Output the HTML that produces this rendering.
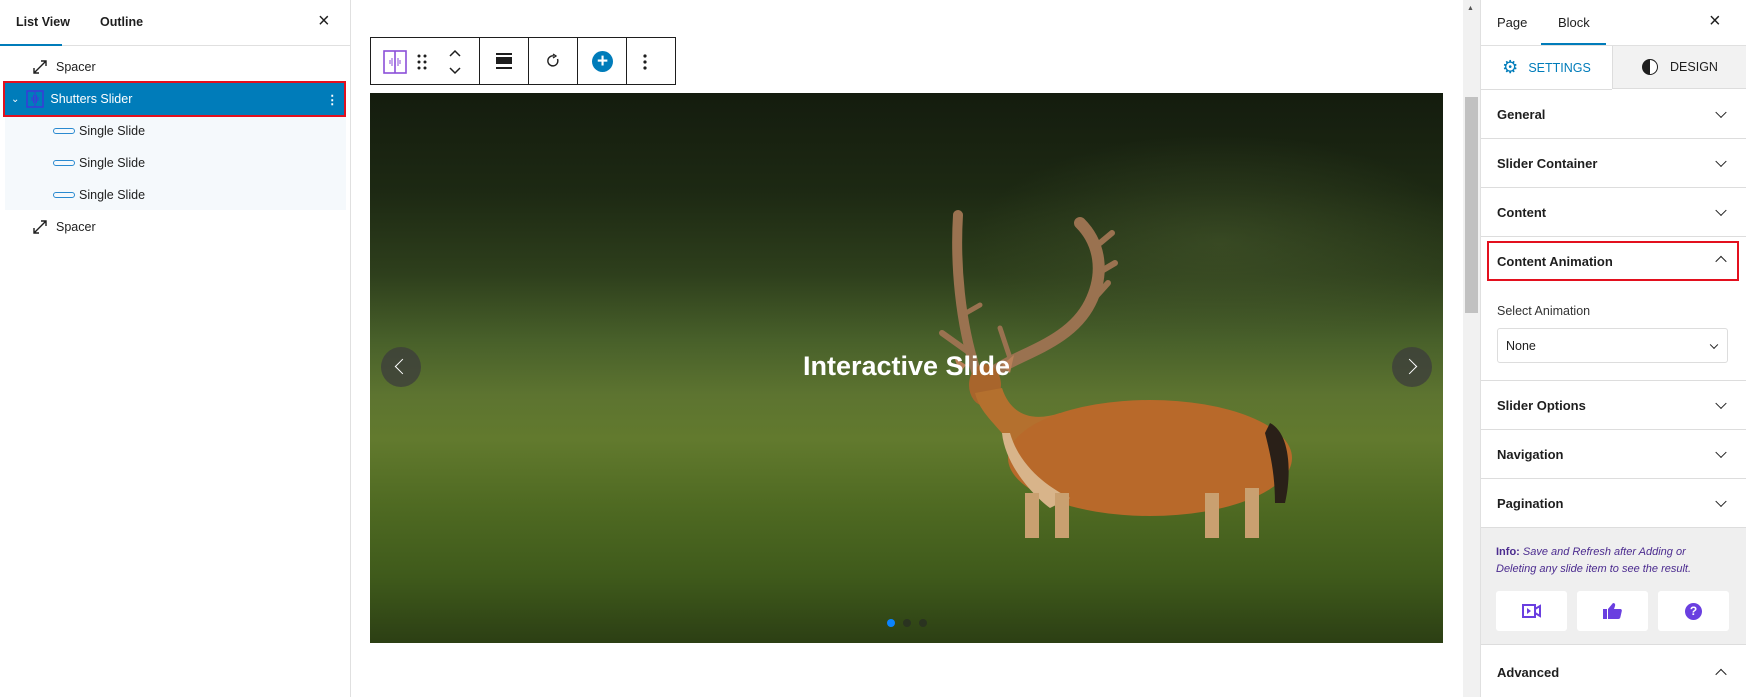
<!DOCTYPE html>
<html><head><meta charset="utf-8"><style>
*{box-sizing:border-box;margin:0;padding:0}
body{width:1746px;height:697px;overflow:hidden;background:#fff;font-family:"Liberation Sans",sans-serif;color:#1e1e1e;position:relative}
.abs{position:absolute}
.lp{left:0;top:0;width:351px;height:697px;border-right:1px solid #e0e0e0;background:#fff}
.row{position:absolute;left:0;width:351px;font-size:12.5px;display:flex;align-items:center}
.rp{left:1480px;top:0;width:266px;height:697px;background:#fff;border-left:1px solid #e0e0e0}
.sec{position:absolute;left:0;width:266px;border-bottom:1px solid #ddd;font-size:13px;font-weight:bold;display:flex;align-items:center;padding-left:16px;color:#1e1e1e}
.chev{position:absolute;right:22px;top:50%;width:8px;height:8px;border-right:1.6px solid #1e1e1e;border-bottom:1.6px solid #1e1e1e;transform:translateY(-70%) rotate(45deg)}
.chev.up{transform:translateY(-20%) rotate(-135deg)}
.tb{position:absolute;top:0;height:47px;border-right:1px solid #1e1e1e}
</style></head><body>

<div class="abs lp">
  <div class="abs" style="left:16px;top:15px;font-size:12.5px;font-weight:bold">List View</div>
  <div class="abs" style="left:100px;top:15px;font-size:12.5px;font-weight:bold">Outline</div>
  <div class="abs" style="left:318px;top:10px;font-size:20px">×</div>
  <div class="abs" style="left:0;top:45px;width:351px;height:1px;background:#e0e0e0"></div>
  <div class="abs" style="left:0;top:44px;width:62px;height:2px;background:#007cba"></div>

  <div class="row" style="top:55px;height:24px;padding-left:32px">
    <svg width="16" height="16" viewBox="0 0 16 16"><path d="M2 14L14 2M9 2h5v5M2 9v5h5" fill="none" stroke="#1e1e1e" stroke-width="1.4"/></svg>
    <span style="margin-left:8px">Spacer</span></div>

  <div class="abs" style="left:5px;top:117px;width:341px;height:93px;background:#f5f9fc"></div>
  <div class="abs" style="left:3px;top:81px;width:343px;height:36px;background:#007cba;border:2px solid #e3101e"></div>
  <div class="row" style="top:85px;height:28px;padding-left:11px;color:#fff">
    <span style="font-size:10px">&#8964;</span>
    <svg style="margin-left:7px" width="18" height="18" viewBox="0 0 18 18"><rect x="1" y="1" width="16" height="16" fill="none" stroke="#3a3ad8" stroke-width="1.5"/><path d="M9 1v16M6 7v4M12 7v4M7.5 5v8M10.5 5v8" stroke="#3a3ad8" stroke-width="1"/></svg>
    <span style="margin-left:6px">Shutters Slider</span>
    <span style="position:absolute;left:326px;font-weight:bold">&#8942;</span></div>

  <div class="row" style="top:119px;height:24px;padding-left:53px"><span style="display:inline-block;width:22px;height:6px;border:1.6px solid #2a8ad0;border-radius:3px"></span><span style="margin-left:4px">Single Slide</span></div>
  <div class="row" style="top:151px;height:24px;padding-left:53px"><span style="display:inline-block;width:22px;height:6px;border:1.6px solid #2a8ad0;border-radius:3px"></span><span style="margin-left:4px">Single Slide</span></div>
  <div class="row" style="top:183px;height:24px;padding-left:53px"><span style="display:inline-block;width:22px;height:6px;border:1.6px solid #2a8ad0;border-radius:3px"></span><span style="margin-left:4px">Single Slide</span></div>

  <div class="row" style="top:215px;height:24px;padding-left:32px">
    <svg width="16" height="16" viewBox="0 0 16 16"><path d="M2 14L14 2M9 2h5v5M2 9v5h5" fill="none" stroke="#1e1e1e" stroke-width="1.4"/></svg>
    <span style="margin-left:8px">Spacer</span></div>
</div>

<div class="abs" style="left:370px;top:37px;width:306px;height:48px;border:1px solid #1e1e1e;background:#fff">
  <div class="tb" style="left:0;width:109px">
    <svg class="abs" style="left:12px;top:12px" width="24" height="24" viewBox="0 0 24 24"><rect x="1" y="1" width="22" height="22" fill="none" stroke="#8b4fd8" stroke-width="1.6"/><path d="M12 1v22" stroke="#8b4fd8" stroke-width="1.6"/><path d="M7 10v4M9 8v8M15 8v8M17 10v4" stroke="#8b4fd8" stroke-width="1"/></svg>
    <svg class="abs" style="left:45px;top:15px" width="12" height="18" viewBox="0 0 12 18"><g fill="#1e1e1e"><circle cx="3" cy="3" r="1.5"/><circle cx="9" cy="3" r="1.5"/><circle cx="3" cy="9" r="1.5"/><circle cx="9" cy="9" r="1.5"/><circle cx="3" cy="15" r="1.5"/><circle cx="9" cy="15" r="1.5"/></g></svg>
    <svg class="abs" style="left:77px;top:11px" width="14" height="26" viewBox="0 0 14 26"><path d="M2 7l5-5 5 5M2 19l5 5 5-5" fill="none" stroke="#1e1e1e" stroke-width="1.5"/></svg>
  </div>
  <div class="tb" style="left:109px;width:49px"><div class="abs" style="left:16px;top:15px;width:16px;height:2px;background:#1e1e1e"></div><div class="abs" style="left:16px;top:19px;width:16px;height:7px;background:#1e1e1e"></div><div class="abs" style="left:16px;top:29px;width:16px;height:2px;background:#1e1e1e"></div></div>
  <div class="tb" style="left:158px;width:49px"><svg class="abs" style="left:16px;top:15px" width="16" height="16" viewBox="0 0 16 16"><path d="M12.5 6A5 5 0 1 1 9 3" fill="none" stroke="#1e1e1e" stroke-width="1.4"/><path d="M8 1l3 2-3 2" fill="none" stroke="#1e1e1e" stroke-width="1.3"/></svg></div>
  <div class="tb" style="left:207px;width:49px"><div class="abs" style="left:14px;top:13px;width:21px;height:21px;border-radius:50%;background:#007cba;color:#fff;font-size:19px;font-weight:bold;text-align:center;line-height:21px">+</div></div>
  <svg class="abs" style="left:271px;top:15px" width="6" height="18" viewBox="0 0 6 18"><g fill="#1e1e1e"><circle cx="3" cy="3" r="1.6"/><circle cx="3" cy="9" r="1.6"/><circle cx="3" cy="15" r="1.6"/></g></svg>
</div>

<div class="abs" style="left:370px;top:93px;width:1073px;height:550px;overflow:hidden;background:linear-gradient(180deg,#141c0e 0%,#1d2913 18%,#2e3f1c 33%,#48602a 45%,#5d7430 55%,#627a2e 63%,#4f6a22 75%,#3f5a1b 88%,#2c3f14 100%)">
  <div class="abs" style="left:600px;top:40px;width:500px;height:220px;background:radial-gradient(ellipse at center,rgba(80,100,50,.4),rgba(0,0,0,0) 70%)"></div>
  <svg class="abs" style="left:0;top:0" width="1073" height="550" viewBox="0 0 1073 550">
    <g fill="none" stroke="#9a7250" stroke-linecap="round">
      <path d="M606 278 C590 230 585 170 588 122" stroke-width="10"/>
      <path d="M600 260 L572 240" stroke-width="6"/>
      <path d="M596 220 L610 212" stroke-width="5"/>
      <path d="M625 278 C650 260 700 250 720 210 C735 180 730 150 710 130" stroke-width="12"/>
      <path d="M720 210 L738 190 M728 180 L745 170 M730 150 L742 140" stroke-width="6"/>
      <path d="M640 265 L630 235" stroke-width="5"/>
    </g>
    <ellipse cx="615" cy="292" rx="16" ry="21" fill="#a8652c"/>
    <path d="M596 272 l-12 -8 6 16z M632 272 l12 -10 -4 18z" fill="#b98058"/>
    <path d="M605 300 L632 295 C640 320 660 330 690 320 L700 370 C680 380 650 370 640 350 C625 330 610 320 605 300Z" fill="#b4702e"/>
    <ellipse cx="780" cy="365" rx="142" ry="58" fill="#b8692a"/>
    <path d="M900 330 C920 340 922 380 915 410 L905 410 C905 380 900 360 895 340Z" fill="#2a2018"/>
    <path d="M640 340 C650 375 680 395 700 405 L680 415 C660 400 635 370 632 340Z" fill="#d8b48a"/>
    <g fill="#c9a070"><rect x="655" y="400" width="14" height="45"/><rect x="685" y="400" width="14" height="45"/><rect x="835" y="400" width="14" height="45"/><rect x="875" y="395" width="14" height="50"/></g>
  </svg>
  <div class="abs" style="left:0;top:258px;width:1073px;text-align:center;color:#fff;font-size:27px;font-weight:bold">Interactive Slide</div>
  <div class="abs" style="left:11px;top:254px;width:40px;height:40px;border-radius:50%;background:rgba(60,60,60,.75)"><div class="abs" style="left:16px;top:14px;width:11px;height:11px;border-left:1.8px solid #fff;border-bottom:1.8px solid #fff;transform:rotate(45deg)"></div></div>
  <div class="abs" style="left:1022px;top:254px;width:40px;height:40px;border-radius:50%;background:rgba(60,60,60,.75)"><div class="abs" style="left:12px;top:14px;width:11px;height:11px;border-right:1.8px solid #fff;border-top:1.8px solid #fff;transform:rotate(45deg)"></div></div>
  <div class="abs" style="left:517px;top:526px;width:8px;height:8px;border-radius:50%;background:#0a84ff"></div>
  <div class="abs" style="left:533px;top:526px;width:8px;height:8px;border-radius:50%;background:#2a3320"></div>
  <div class="abs" style="left:549px;top:526px;width:8px;height:8px;border-radius:50%;background:#2a3320"></div>
</div>

<div class="abs" style="left:1463px;top:0;width:17px;height:697px;background:#f1f1f1"></div>
<div class="abs" style="left:1465px;top:97px;width:13px;height:216px;background:#c1c1c1"></div>
<div class="abs" style="left:1467px;top:5px;font-size:7px;color:#555">&#9650;</div>

<div class="abs rp">
  <div class="abs" style="left:16px;top:15px;font-size:13px">Page</div>
  <div class="abs" style="left:77px;top:15px;font-size:13px">Block</div>
  <div class="abs" style="left:60px;top:43px;width:65px;height:2px;background:#007cba"></div>
  <div class="abs" style="left:228px;top:10px;font-size:20px">×</div>
  <div class="abs" style="left:0;top:45px;width:266px;height:1px;background:#e0e0e0"></div>
  <div class="abs" style="left:0;top:46px;width:131px;height:43px;background:#fff;color:#007cba;font-size:12.5px;display:flex;align-items:center;justify-content:center">
    <span style="font-size:18px;margin-right:10px">&#9881;</span>SETTINGS</div>
  <div class="abs" style="left:131px;top:46px;width:135px;height:43px;background:#f2f2f2;border-left:1px solid #ddd;border-bottom:1px solid #ddd;font-size:12.5px;display:flex;align-items:center;justify-content:center">
    <span style="display:inline-block;width:16px;height:16px;border-radius:50%;border:1.6px solid #1e1e1e;background:linear-gradient(90deg,#1e1e1e 50%,#fff 50%);margin-right:12px"></span>DESIGN</div>
  <div class="abs" style="left:0;top:89px;width:131px;height:1px;background:#ddd"></div>

  <div class="sec" style="top:90px;height:49px">General<span class="chev"></span></div>
  <div class="sec" style="top:139px;height:49px">Slider Container<span class="chev"></span></div>
  <div class="sec" style="top:188px;height:49px">Content<span class="chev"></span></div>
  <div class="abs" style="left:6px;top:241px;width:252px;height:40px;border:2px solid #e3101e"></div>
  <div class="abs" style="left:16px;top:254px;font-size:13px;font-weight:bold">Content Animation</div>
  <div class="abs" style="left:0;top:237px;width:266px;height:44px"><span class="chev up" style="top:22px"></span></div>
  <div class="abs" style="left:16px;top:304px;font-size:12.5px;color:#333">Select Animation</div>
  <div class="abs" style="left:16px;top:328px;width:231px;height:35px;border:1px solid #ddd;border-radius:3px;font-size:12.5px;padding:10px 8px">None<span class="chev" style="right:10px;width:6px;height:6px;border-width:1.3px"></span></div>
  <div class="abs" style="left:0;top:380px;width:266px;height:1px;background:#ddd"></div>
  <div class="sec" style="top:381px;height:49px">Slider Options<span class="chev"></span></div>
  <div class="sec" style="top:430px;height:49px">Navigation<span class="chev"></span></div>
  <div class="sec" style="top:479px;height:49px">Pagination<span class="chev"></span></div>
  <div class="abs" style="left:0;top:528px;width:266px;height:117px;background:#efefef;border-bottom:1px solid #ddd"></div>
  <div class="abs" style="left:15px;top:544px;width:215px;font-size:11px;line-height:17px;color:#4b2b8f"><b>Info:</b> <i>Save and Refresh after Adding or Deleting any slide item to see the result.</i></div>
  <div class="abs" style="left:15px;top:591px;width:71px;height:40px;background:#fff;border-radius:3px"><svg class="abs" style="left:26px;top:12px" width="20" height="16" viewBox="0 0 20 16"><rect x="1" y="2" width="12" height="12" fill="none" stroke="#6a3fe0" stroke-width="2"/><path d="M5 5v6l4-3z" fill="#6a3fe0"/><path d="M13 6l5-3v10l-5-3" fill="none" stroke="#6a3fe0" stroke-width="2"/></svg></div>
  <div class="abs" style="left:96px;top:591px;width:71px;height:40px;background:#fff;border-radius:3px"><svg class="abs" style="left:26px;top:11px" width="19" height="18" viewBox="0 0 19 18"><rect x="0" y="7" width="4" height="10" fill="#6a3fe0"/><path d="M5 7L10 1c2 0 2.5 1.5 2 3l-1 3h6c1.5 0 2 1 1.8 2l-1.5 6.5c-.3 1-1 1.5-2 1.5H5z" fill="#6a3fe0"/></svg></div>
  <div class="abs" style="left:177px;top:591px;width:71px;height:40px;background:#fff;border-radius:3px"><div class="abs" style="left:27px;top:12px;width:17px;height:17px;border-radius:50%;background:#6a3fe0;color:#fff;font-size:12px;font-weight:bold;text-align:center;line-height:17px">?</div></div>
  <div class="sec" style="top:646px;height:52px;border-bottom:none">Advanced<span class="chev up"></span></div>
</div>
</body></html>
